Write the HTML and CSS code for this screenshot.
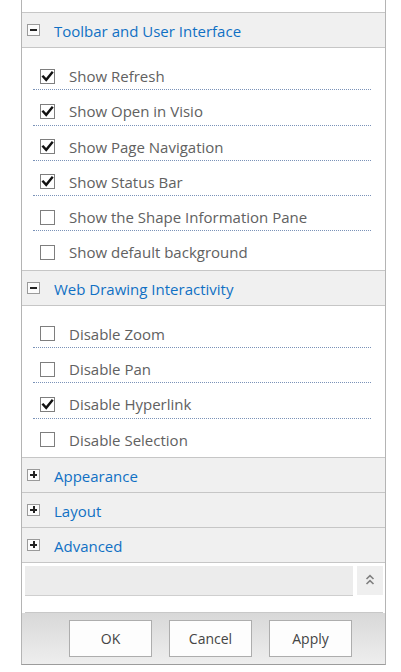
FILE: index.html
```html
<!DOCTYPE html>
<html>
<head>
<meta charset="utf-8">
<link rel="stylesheet" href="styles.css">
</head>
<body>
<div class="panel">
  <div class="top"></div>

  <div class="hdr"><span class="tog minus"></span><span class="title">Toolbar and User Interface</span></div>
  <div class="sect">
    <div class="row"><span class="cb on"><svg viewBox="0 0 15 15"><path d="M3.2 7.6 L6.2 10.8 L12 3.6"/></svg></span><span class="lbl">Show Refresh</span></div>
    <div class="row"><span class="cb on"><svg viewBox="0 0 15 15"><path d="M3.2 7.6 L6.2 10.8 L12 3.6"/></svg></span><span class="lbl">Show Open in Visio</span></div>
    <div class="row"><span class="cb on"><svg viewBox="0 0 15 15"><path d="M3.2 7.6 L6.2 10.8 L12 3.6"/></svg></span><span class="lbl">Show Page Navigation</span></div>
    <div class="row"><span class="cb on"><svg viewBox="0 0 15 15"><path d="M3.2 7.6 L6.2 10.8 L12 3.6"/></svg></span><span class="lbl">Show Status Bar</span></div>
    <div class="row"><span class="cb"></span><span class="lbl">Show the Shape Information Pane</span></div>
    <div class="row last"><span class="cb"></span><span class="lbl">Show default background</span></div>
  </div>

  <div class="hdr"><span class="tog minus"></span><span class="title">Web Drawing Interactivity</span></div>
  <div class="sect">
    <div class="row"><span class="cb"></span><span class="lbl">Disable Zoom</span></div>
    <div class="row"><span class="cb"></span><span class="lbl">Disable Pan</span></div>
    <div class="row"><span class="cb on"><svg viewBox="0 0 15 15"><path d="M3.2 7.6 L6.2 10.8 L12 3.6"/></svg></span><span class="lbl">Disable Hyperlink</span></div>
    <div class="row last"><span class="cb"></span><span class="lbl">Disable Selection</span></div>
  </div>

  <div class="hdr"><span class="tog plus"></span><span class="title">Appearance</span></div>
  <div class="hdr"><span class="tog plus"></span><span class="title">Layout</span></div>
  <div class="hdr"><span class="tog plus"></span><span class="title">Advanced</span></div>

  <div class="tail">
    <div class="bar"></div>
    <div class="scroll"><svg viewBox="0 0 10 14"><path d="M1.5 6 L5 2.6 L8.5 6 M1.5 11 L5 7.6 L8.5 11"/></svg></div>
  </div>
  <div class="sep"></div>

  <div class="footer">
    <button class="btn">OK</button>
    <button class="btn">Cancel</button>
    <button class="btn">Apply</button>
  </div>
</div>
</body>
</html>
```

FILE: styles.css
```css
html, body {
  margin: 0;
  padding: 0;
  background: #ffffff;
}
body {
  font-family: "Open Sans", "Noto Sans", sans-serif;
  font-size: 15px;
}
.panel {
  margin-left: 21px;
  width: 363px;
  border-left: 1px solid #b4b4b4;
  border-right: 1px solid #b4b4b4;
  border-bottom: 1px solid #9c9c9c;
}
.top {
  height: 12px;
  border-bottom: 1px solid #c6c6c6;
}
.hdr {
  height: 34px;
  background: #f0f0f0;
  border-bottom: 1px solid #c6c6c6;
  display: flex;
  align-items: center;
  padding-left: 5px;
}
.tog {
  width: 11px;
  height: 10px;
  border: 1px solid #9a9a9a;
  background: #fbfbfb;
  position: relative;
  margin-right: 14px;
  flex: none;
}
.tog::before {
  content: "";
  position: absolute;
  left: 2px;
  top: 4px;
  width: 7px;
  height: 2px;
  background: #222;
}
.tog.plus::after {
  content: "";
  position: absolute;
  left: 4.5px;
  top: 1.5px;
  width: 2px;
  height: 7px;
  background: #222;
}
.title {
  color: #1070c4;
  line-height: 22px;
  padding-top: 2px;
}
.sect {
  padding: 7px 14px 3px 11px;
  border-bottom: 1px solid #c6c6c6;
}
.row {
  display: flex;
  align-items: center;
  padding: 10px 0 2.3px 7px;
  border-bottom: 1px dotted #7a92b8;
}
.row.last {
  border-bottom: 1px solid transparent;
}
.cb {
  width: 13px;
  height: 13px;
  border: 1px solid #7e7e7e;
  background: #fff;
  flex: none;
  margin-right: 14px;
  display: flex;
}
.cb svg {
  width: 15px;
  height: 15px;
  margin: -1px;
}
.cb svg path {
  fill: none;
  stroke: #111;
  stroke-width: 2.4;
  stroke-linecap: square;
}
.lbl {
  color: #616161;
  line-height: 22px;
}
.tail {
  display: flex;
  padding: 3px 2px 0 3px;
  gap: 4px;
  height: 30px;
}
.bar {
  flex: 1;
  height: 29px;
  background: #ececec;
  border-bottom: 1px solid #cfcfcf;
}
.scroll {
  width: 26px;
  height: 29px;
  background: #efefef;
  display: flex;
  align-items: center;
  justify-content: center;
}
.scroll svg {
  width: 10px;
  height: 14px;
}
.scroll svg path {
  fill: none;
  stroke: #808080;
  stroke-width: 1.6;
}
.sep {
  margin: 16px 2px 0 3px;
  border-top: 1px solid #c8c8c8;
}
.footer {
  height: 51px;
  background: linear-gradient(#d8d8d8, #eeeeee);
  display: flex;
  justify-content: flex-end;
  align-items: center;
  gap: 17px;
  padding-right: 33px;
}
.btn {
  width: 83px;
  height: 37px;
  border: 1px solid #adadad;
  background: #fdfdfd;
  font-family: "Open Sans", "Noto Sans", sans-serif;
  font-size: 14px;
  color: #444;
  padding: 0;
  margin: 0;
}
```
